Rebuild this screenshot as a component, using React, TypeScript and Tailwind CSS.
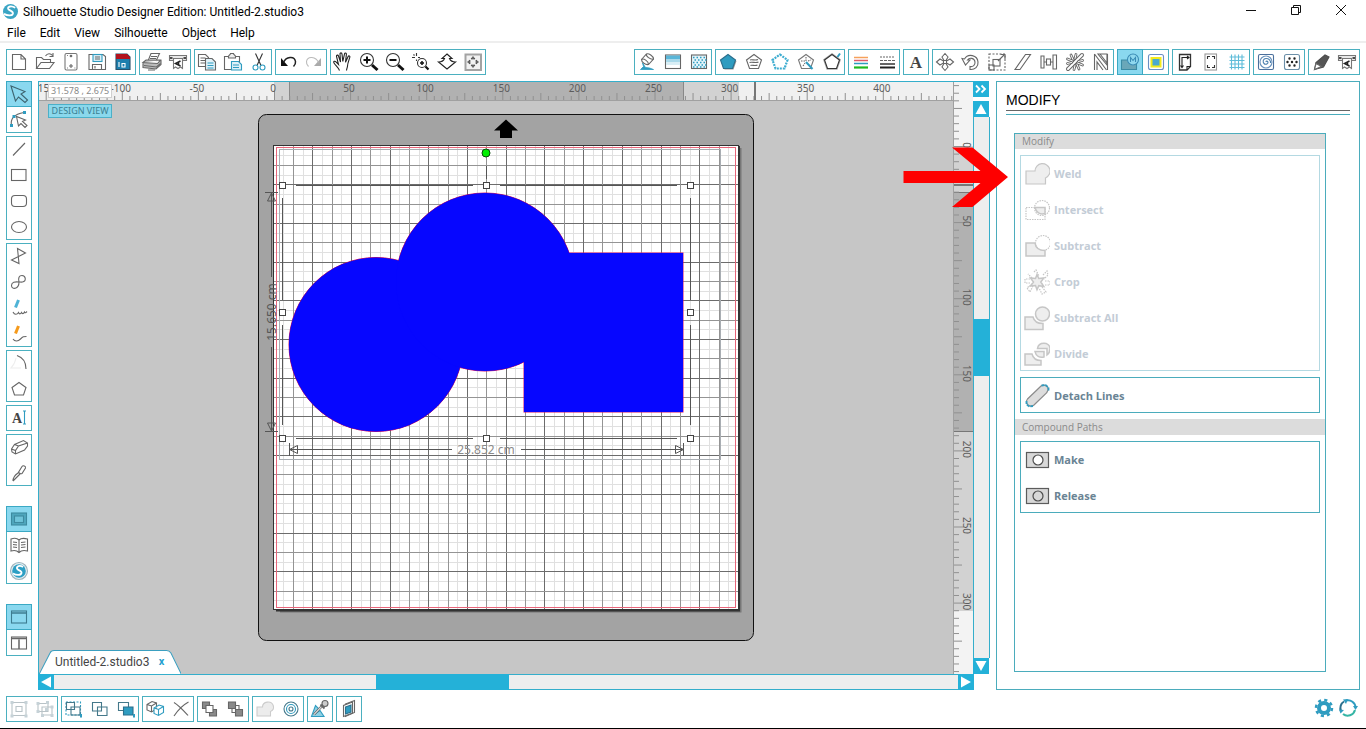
import type { ReactNode } from "react";
import clsx from "clsx";

// Blue used for the accent parts of the icons
const BLUE = "#2f9cc0";
const DARK = "#4d4d4d";
const PENTAGON = "M13 5.5l7.5 5.5-3 8.5h-9l-3-8.5z";

// Every icon is drawn on a 26x26 board, the size of a toolbar button
const ICONS: Record<string, ReactNode> = {
  new: <path d="M6.500 5.500h8.500l4.500 4.500v10.500h-13zM15 5.500v4.500h4.500" />,
  open: (
    <>
      <path d="M4.500 19V8.500h5l2 2h7v2.500M4.500 19.500l4.500-6h13l-4.500 6z" />
      <path d="M13.500 7c2-3 5-3 7-.5M21 4v3.500h-3.500" />
    </>
  ),
  library: (
    <>
      <rect x="7" y="4.500" width="12" height="16.500" rx="1.500" stroke="#777" />
      <circle cx="13" cy="7" r=".8" />
      <path d="M13 15v4M11 17h4M9 6.500h.8M9 19h.8M16.500 19h.8" />
    </>
  ),
  save: (
    <>
      <path d="M5 5.500h14l2.500 2v13H5z" />
      <rect x="9" y="5.500" width="9" height="7" stroke={BLUE} fill="#d9eef6" />
      <path d="M8.500 20.500v-5h9v5M11 17v2.500M11 8h5M11 10h5" />
    </>
  ),
  sdcard: (
    <>
      <path d="M6 5h11l3 3v12.500H6z" fill="#1d7fae" stroke="#27506b" />
      <path d="M6 5h11l3 3v2H6z" fill="#b3121d" stroke="none" />
      <path d="M9 13v5M12 14v4h3v-3.500h-3" stroke="#fff" />
    </>
  ),
  print: (
    <>
      <path d="M9 12l3-7.500h8.500L17 12M12 7.500h6M11 9.500h6" />
      <path d="M4 13.500l3-2.500h14.500l-3 3.500zM4 13.500v5l13 1.500 5-4.500v-4.500" fill="#bbb" />
      <path d="M5 16.500l12.500 1.500 4-3.500M9 21h7" />
    </>
  ),
  cutter: (
    <>
      <path d="M4.500 6.500h17v5h-17z" fill="#e8e8e8" stroke="#777" />
      <path d="M5 8h2.500v2H5zM18.500 8H21v2h-2.500z" fill={DARK} stroke="none" />
      <path d="M8.500 9.500h9v10l-2-1.500-2.500 1.500-2.500-1.500-2 1.500z" fill="#fff" stroke="#777" />
      <path d="M15.500 12l-5 2.500 5 2.500M13.500 13v3" stroke="#222" strokeWidth="1.500" />
    </>
  ),
  copy: (
    <>
      <path d="M4.500 5.500h7l3 3v9h-10z" fill="#fff" />
      <path d="M6.500 9h5M6.500 11.500h5M6.500 14h5" />
      <path d="M11.500 9.500h6.500l3.500 3.500v8h-10z" fill="#dff1f8" />
      <path d="M13.500 14h6M13.500 16.500h6M13.500 19h6" stroke={BLUE} />
    </>
  ),
  paste: (
    <>
      <path d="M4.500 7.500h15v13h-15z" />
      <path d="M8.500 7.500c0-1.500 2-1.500 2-3h3c0 1.500 2 1.500 2 3v1.500h-7z" fill="#eee" />
      <path d="M11.500 12.500h7l3 3v5.500h-10z" fill="#dff1f8" stroke={BLUE} />
      <path d="M13 16h6M13 18.500h6" stroke={BLUE} />
    </>
  ),
  cut: (
    <>
      <path d="M9.500 4.500l5.500 12M16.500 4.500L11 16.500" stroke="#333" />
      <circle cx="9.500" cy="18.500" r="2.500" stroke={BLUE} />
      <circle cx="16.500" cy="18.500" r="2.500" stroke={BLUE} />
    </>
  ),
  undo: (
    <>
      <path d="M6 9v8h7z" fill="#111" stroke="none" />
      <path d="M8.500 13.500c2.500-6 11-7 12-1 .3 2-.5 3.500-2 5" stroke="#222" strokeWidth="1.500" />
    </>
  ),
  redo: (
    <>
      <path d="M20 9v8h-7z" fill="#aaa" stroke="none" />
      <path d="M17.500 13.500c-2.500-6-11-7-12-1-.3 2 .5 3.500 2 5" stroke="#bbb" />
    </>
  ),
  pan: (
    <path
      d="M9.500 21.500c-1-3-4-5-5.500-7.500-1-1.700 1-2.300 2-1l2.500 2.500-2-8c-.3-1.500 1.500-2 2-.5l2 6-.5-8c0-1.500 1.900-1.500 2 0l.8 7.500L14.500 5c.2-1.500 2-1.200 1.900.2l-.9 8 2.500-5.500c.7-1.400 2.300-.7 1.800.7-1.300 4-2.200 6-2.300 8.500-.1 1.800-.8 2.600-1 4.600"
      stroke="#222"
    />
  ),
  zoomIn: (
    <>
      <circle cx="11" cy="11" r="6.500" stroke="#333" />
      <path d="M7.500 11h7M11 7.500v7" stroke="#111" strokeWidth="2" />
      <path d="M16 16l5.500 5" stroke="#111" strokeWidth="3" />
    </>
  ),
  zoomOut: (
    <>
      <circle cx="11" cy="11" r="6.500" stroke="#333" />
      <path d="M7.500 11h7" stroke="#111" strokeWidth="2" />
      <path d="M16 16l5.500 5" stroke="#111" strokeWidth="3" />
    </>
  ),
  zoomArea: (
    <>
      <path d="M4 8.500h3M10 8.500h2M8.500 4v3M8.500 10.500V12M5.500 5.500l1 1" stroke="#333" />
      <circle cx="14" cy="14" r="4.500" stroke="#333" />
      <path d="M12 14h4M14 12v4" stroke="#111" strokeWidth="1.500" />
      <path d="M17.500 17.500l3 3" stroke="#111" strokeWidth="2.200" />
    </>
  ),
  zoomDrag: <path d="M13 5l5 4.500h-2.500c1 2.500 2.500 3.500 6 3.500L13 20l-8.500-7c3.500 0 5-1 6-3.500H8z" stroke="#222" />,
  fit: (
    <>
      <rect x="5.500" y="5.500" width="15.500" height="15.500" stroke="#a3a3a3" strokeWidth="2" fill="#f2f2f2" />
      <path d="M13 7.500l2 2.500h-4zM13 18.500l2-2.500h-4zM7.500 13l2.500-2v4zM18.500 13L16 11v4z" fill="#777" stroke="#333" strokeWidth=".6" />
    </>
  ),
  fillColor: (
    <>
      <path d="M7.500 10.500l5-5.500c2-1 7 2 7 5l-5 5.500c-3 .5-7-2-7-5z" />
      <path d="M7.500 10.500c2-1.500 7 1.500 7 5M12.500 5c-1 2 4 6 7 5" />
      <path d="M8.500 14l1 3.500-3 3h13l-4-1.500-4-.5z" fill={BLUE} stroke={BLUE} strokeWidth=".8" />
    </>
  ),
  gradient: (
    <>
      <rect x="5.500" y="6" width="15" height="13.500" fill="#fff" />
      <path d="M6 6.500h14v3.500H6z" fill="#5ab6d8" stroke="none" />
      <path d="M6 10h14v3H6z" fill="#a9d9ea" stroke="none" />
      <path d="M6 13h14v3H6z" fill="#d9eef5" stroke="none" />
    </>
  ),
  pattern: (
    <>
      <rect x="5.500" y="6" width="15" height="13.500" fill="#e4f4fa" />
      <path d="M7 8.500h13M8.500 11h12M7 13.500h13M8.500 16h12M7 18h13" stroke={BLUE} strokeDasharray="1.500 2" strokeWidth="1.500" />
    </>
  ),
  pentFill: (
    <>
      <path d={PENTAGON} transform="translate(1 1)" fill="#999" stroke="none" />
      <path d={PENTAGON} fill={BLUE} stroke="#2b6f8c" />
    </>
  ),
  pentLines: (
    <>
      <path d={PENTAGON} />
      <path d="M9 11c2-1 5 1 8-.5M8.500 13.500c3-1 6 1 9-.5M9.500 16.500c2-1 4 1 7-.5" />
    </>
  ),
  pentDots: <path d={PENTAGON} stroke="#3cacd0" strokeWidth="2.200" strokeDasharray="2 1" />,
  pentStar: (
    <>
      <path d={PENTAGON} stroke="#777" />
      <path d="M13 8v4M8 12h4M10 17l2-3M15 12l3-1" strokeDasharray="1.500 1" />
      <path d="M13 13l6.500 7" stroke={BLUE} strokeWidth="2" />
    </>
  ),
  pentPen: (
    <>
      <path d={PENTAGON} stroke="#aaa" strokeWidth="2.500" />
      <path d={PENTAGON} fill="#fff" stroke="#333" />
      <path d="M18.500 8L21 4.500" stroke={BLUE} strokeWidth="2" />
    </>
  ),
  lineColor: (
    <>
      <path d="M6 8.500h14" stroke="#f6a15c" strokeWidth="1.500" />
      <path d="M6 11.500h14" stroke="#e05a6a" strokeWidth="1.500" />
      <path d="M6 14.500h14" stroke={BLUE} strokeWidth="1.500" />
      <path d="M6 18.500h14" stroke="#1fb91f" strokeWidth="2.200" />
    </>
  ),
  lineStyle: (
    <>
      <path d="M6 8h15" strokeDasharray="2 1" />
      <path d="M6 11.500h15" strokeDasharray="3 1" />
      <path d="M6 15h15" stroke="#333" strokeWidth="1.500" />
      <path d="M6 18.500h15" stroke="#222" strokeWidth="2" />
    </>
  ),
  text: (
    <text x="13" y="19" textAnchor="middle" fontFamily="Liberation Serif, serif" fontWeight="700" fontSize="17" fill="#444" stroke="none">
      A
    </text>
  ),
  move: (
    <path d="M13 4.500l3 3.500-2 3.500h-2L10 8zM13 21.500l3-3.500-2-3.500h-2L10 18zM4.500 13L8 10l3.500 2v2L8 16zM21.500 13L18 10l-3.500 2v2l3.500 2z" />
  ),
  rotate: <path d="M4 9.500l3.500 6.500 4.500-5H9.500c2-3 7-2 7.500 2 .3 3-2 5-5 4.500v3c5 .5 8.500-3 8-7.500-.6-7-10-9-13.500-3z" />,
  scale: (
    <>
      <path d="M5 5h16v16H5z" strokeDasharray="2 1.500" />
      <rect x="5" y="16" width="5" height="5" />
      <rect x="9" y="10.500" width="7" height="6.500" />
      <path d="M14 12l6-6M16.500 5.500H21V10" />
    </>
  ),
  shear: <path d="M15.500 5.500h5L10 20.500H5z" />,
  align: (
    <>
      <path d="M5 7v12h3V7zM17 6v14h3.500V6z" />
      <rect x="10.500" y="10" width="4" height="6" />
      <path d="M8 13h2.500M14.500 13H17" />
    </>
  ),
  replicate: (
    <>
      <path d="M6 20L20 6" strokeWidth="4" strokeLinecap="round" />
      <path d="M6 20L20 6" strokeWidth="2" stroke="#fff" strokeLinecap="round" />
      <path d="M9 6l2 4.500M5.500 10l5 2M14 5.500L13 9.500M5.500 14.500l4-1M17 20l-2-4.500M20.500 16l-5-2M12 20.500l1-4M20.500 11.500l-4 1" strokeWidth="2.800" strokeLinecap="round" />
      <path
        d="M9 6l2 4.500M5.500 10l5 2M14 5.500L13 9.500M5.500 14.500l4-1M17 20l-2-4.500M20.500 16l-5-2M12 20.500l1-4M20.500 11.500l-4 1"
        stroke="#fff"
        strokeWidth="1"
        strokeLinecap="round"
      />
    </>
  ),
  nest: (
    <>
      <path d="M6.500 5v16M19.500 5v16M6.500 5l12 16M9 21V13l6 8" />
      <path d="M10 5h9v11zM12 5l7 9" />
    </>
  ),
  modify: (
    <>
      <path d="M4.500 11h15v9.500h-15z" fill="#6aa7b8" stroke="#3a8ca5" />
      <circle cx="16" cy="10.500" r="5.500" fill="#8fd8ee" stroke="#3a8cb5" />
      <path d="M13.500 13V8.500l2.500 3 2.500-3V13" stroke="#3a8cb5" />
    </>
  ),
  offset: (
    <>
      <rect x="5.500" y="5.500" width="15" height="15" rx="2" stroke="#6b8fc4" />
      <rect x="8.500" y="9" width="9" height="8.500" fill="#4aa9cf" stroke="#f3ea1b" strokeWidth="2" />
    </>
  ),
  pageSetup: (
    <>
      <path d="M7.500 5.500h11v12l-3.500 3.500h-7.500z" stroke="#333" strokeWidth="1.300" />
      <path d="M10 18V8.500h7M15 7l2 1.500-2 1.500M8.500 16.500l1.500 2 1.500-2M15 21v-3.500h3.500" stroke="#222" />
    </>
  ),
  regMarks: (
    <>
      <rect x="7" y="5" width="11.500" height="16" stroke="#999" />
      <path d="M9.500 10V7.500H12M14 7.500h2.500V10M9.500 16v2.500H12M14 18.500h2.500V16" stroke="#333" />
    </>
  ),
  grid: <path d="M5.500 8h15M5.500 11.500h15M5.500 15h15M5.500 18.500h15M7.500 5.500v15M11 5.500v15M14.500 5.500v15M18 5.500v15" stroke="#5fbcd9" />,
  trace: (
    <>
      <rect x="5.500" y="5.500" width="15" height="15" rx="1.500" stroke="#4a6f9c" />
      <circle cx="13" cy="13" r="6" stroke="#6b93bd" />
      <path d="M13 13c0-1.500 2-1 2 .5s-2.500 2.500-4 1-1-5 2-5 5 2 4.500 4.500" stroke="#4a7fae" />
    </>
  ),
  rhinestone: (
    <>
      <rect x="5.500" y="5.500" width="15" height="15" rx="2" stroke="#6b8fa8" />
      <path
        d="M10.500 9.500h.01M15.500 9.500h.01M8.500 13h.01M13 13h.01M17.500 13h.01M10.500 16.500h.01M15.500 16.500h.01"
        stroke="#222"
        strokeWidth="2.400"
        strokeLinecap="round"
      />
    </>
  ),
  sketch: (
    <>
      <path d="M6.500 20.500l1.500-7 9-7.500 4 2-5.500 10z" fill="#555" stroke={DARK} />
      <path d="M6.500 20.500l1.500-6 5.500 3z" fill="#fff" />
    </>
  ),
  select: <path d="M5 5l4.500 15 3-4 6.500 5.500 2.500-2.500-6.500-6 4-2.500z" stroke="#3d6470" />,
  editPoints: (
    <>
      <path d="M5.500 19C4 12 8 7 18 5.500" />
      <path d="M4 17h3v3H4zM6.500 8h3v3h-3zM17 4h3v3h-3z" fill={BLUE} stroke="none" />
      <path d="M10.500 9.500l2 9.500 2.500-2.500 4 4 2-2-4.500-4 3-1.500z" fill="#fff" />
    </>
  ),
  line: <path d="M7 19.500L19 7" />,
  rect: <rect x="5.500" y="7.500" width="14.500" height="11" />,
  roundRect: <rect x="5.500" y="7.500" width="15" height="11" rx="3.500" />,
  ellipse: <ellipse cx="13" cy="13" rx="7.500" ry="5.500" />,
  polygon: <path d="M11.500 5.500l8 4.500-14 7 7.500 3.500z" />,
  curve: (
    <path d="M13 13c-1-4 0-6.500 3-6.500 4 0 4.500 6 .5 6.500-1.500.2-2.500 0-3.500 0-4-.5-7.500 0-7.500 3.500 0 4.500 7.500 4 7.500-3.500z" />
  ),
  freehand: (
    <>
      <path d="M9.500 12.500L12.500 5" stroke="#4fb3d6" strokeWidth="3" />
      <path d="M7 17c1.500 3 4 3 5.500.5 1 2.500 2.500 1 3 0 1 2 2.500 1 3-.5 1 1.500 1.500.5 2.500-.5" />
    </>
  ),
  smooth: (
    <>
      <path d="M9.500 12.500L12.500 5" stroke="#f59a1b" strokeWidth="3" />
      <path d="M7 18c2 3 5 2.500 7.500 0s3-2.500 6-2.500" />
    </>
  ),
  arc: (
    <>
      <path d="M10 8c-1 5-3 8-5 10h10" stroke="#eee" />
      <path d="M11 5.500c6 2 9 6.500 9 13.500" />
    </>
  ),
  pentagon: <path d="M13 6.500l7 5-2.500 7.500h-9L6 11.500z" />,
  textTool: (
    <>
      <text x="11" y="18" textAnchor="middle" fontFamily="Liberation Serif, serif" fontWeight="700" fontSize="14" fill="#444" stroke="none">
        A
      </text>
      <path d="M18.500 6v13M17 6h3M17 19h3" stroke={BLUE} />
    </>
  ),
  eraser: <path d="M5.500 15l3-4.500 9-4 4 2.500v3l-3 4-9 4-3.500-2zM5.500 15l4 1.500 3-4.500 9-3M9.500 16.500V20M8.500 10.500l4 1.500" />,
  knife: <path d="M7 21c0-3 2-6 5-8l4-6.500c1-1.500 4-.5 3.500 1.500L16 13.500c-1 .5-2.500 0-3.500-1M7 21l4-4 3-3" />,
  pageView: (
    <>
      <rect x="5.500" y="7" width="15" height="12" fill="#4fa6bd" stroke="#3d8aa0" />
      <rect x="8.500" y="10" width="9" height="6.500" fill="#6fc4da" stroke="#3d8aa0" />
    </>
  ),
  book: (
    <>
      <path d="M5 7c3-1 6-1 8 1 2-2 5-2 8.500-1v12c-3.500-1-6.500-.5-8.500 1.500C11 18.500 8 18 5 19zM13 8v12" />
      <path d="M7 10l4 .5M7 12.500l4 .5M7 15l4 .5M15 10.500l4.500-.5M15 13l4.500-.5M15 15.500l4.500-.5" />
    </>
  ),
  store: (
    <>
      <circle cx="13" cy="13" r="8.500" fill="#e6eef1" stroke="#9db4bd" />
      <circle cx="13" cy="13" r="6.800" fill="#2d9fc4" stroke="none" />
      <path d="M17 9c-3-2-6.500-1-6 1.500.4 2 5 2 4.500 4.500-.5 2.500-5 2.500-8.500.5" stroke="#fff" strokeWidth="1.800" />
    </>
  ),
  window: (
    <>
      <rect x="5.500" y="7" width="15" height="12" stroke="#3d7c90" />
      <path d="M5.500 9h15" stroke="#3d7c90" strokeWidth="1.500" />
    </>
  ),
  split: (
    <>
      <rect x="5.500" y="7" width="15" height="12" />
      <path d="M5.500 8.500h15M13 9.500V19" strokeWidth="1.500" />
    </>
  ),
  group: (
    <g stroke="#b9c3c7">
      <path d="M6 6.500h14v13H6zM10 10.500h6v5h-6z" />
      <path d="M4.500 5h3v3h-3zM18.500 5h3v3h-3zM4.500 18.500h3v3h-3zM18.500 18.500h3v3h-3z" fill="#c6d2d7" stroke="none" />
    </g>
  ),
  ungroup: (
    <g stroke="#b9c3c7">
      <path d="M6 7.500h10v8H6zM10 11h10v8H10z" />
      <path
        d="M4.500 6h3v3h-3zM14 5h3v3h-3zM4.500 14h3v3h-3zM18.500 9.500h3v3h-3zM9 18h3v3H9zM18.500 18h3v3h-3zM13 12h3v3h-3z"
        fill="#c6d2d7"
        stroke="none"
      />
    </g>
  ),
  selectAll: (
    <>
      <path d="M5 6h14.500v13H5z" strokeDasharray="2 1.500" stroke={BLUE} />
      <path d="M5.500 6.500h8v7h-8zM10 11h9v8h-9z" stroke="#44788a" />
      <path d="M20 18v3.500" stroke={BLUE} strokeWidth="2" />
    </>
  ),
  deselect: <path d="M5.500 6.500h9V11h5.500v8.500h-9.500V15h-5zM10.500 15v-4h4v4z" stroke="#44788a" />,
  selectColor: (
    <>
      <path d="M5.500 6.500h10v8h-10z" stroke="#44788a" fill="#fff" />
      <path d="M10.500 11h9.500v8h-9.500z" fill={BLUE} stroke="#2b6f8c" />
      <path d="M21 18v3.500" stroke={BLUE} strokeWidth="2" />
    </>
  ),
  duplicate: (
    <>
      <path d="M5 8.500l5-3 4.500 1.500v6l-5 3L5 14zM5 8.500l4.500 1.500 5-3M9.500 10v6" fill="#fff" />
      <path d="M12 12l5-3 4.500 1.500v6l-5 3-4.500-2zM12 12l4.500 1.500 5-3M16.500 13.500v6" fill="#fff" stroke={BLUE} />
    </>
  ),
  delete: <path d="M6 6.500c5 3 9 7.500 14 13M20.500 6C15 9 10 14 6 20" />,
  bringFront: (
    <>
      <path d="M5.500 6h7v6.500h-7zM12.500 13.500h7v6.500h-7z" fill="#8a8a8a" />
      <path d="M9 9.500h7v7H9z" fill="#fff" />
    </>
  ),
  sendBack: (
    <>
      <path d="M9 9.500h7v7H9z" fill="#fff" />
      <path d="M5.500 6h7v6.500h-7zM12.500 13.500h7v6.500h-7z" fill="#8a8a8a" />
    </>
  ),
  weldTool: <path d="M5 11h5.500a5.500 5 0 1 1 8 4.500V20H5z" fill="#ececec" stroke="#ccc" />,
  offsetTool: (
    <>
      <circle cx="13" cy="13" r="7" stroke="#44788a" />
      <circle cx="13" cy="13" r="4.500" stroke={BLUE} />
      <circle cx="13" cy="13" r="2" stroke="#44788a" />
    </>
  ),
  eyedropper: (
    <>
      <path d="M4.500 20.500l4-11 3 3-4.500 6 6-4 4 6z" fill="#8fd0e4" stroke={BLUE} />
      <path d="M7 18.500l8-8.500" stroke="#555" strokeWidth="2.500" />
      <path d="M7 18.500l8-8.500" stroke="#ddd" />
      <circle cx="18" cy="7.500" r="3" fill="#ccc" />
      <path d="M13.500 8.500l4 4" strokeWidth="1.800" />
    </>
  ),
  flip: (
    <>
      <path d="M9.500 8l9-3.500v12l-9 4z" fill="#fff" />
      <path d="M7.500 9.500v11l9-3.500V6z" fill="#fff" />
      <path d="M9.500 11l5.500-2v7l-5.500 2z" fill={BLUE} stroke="#2b6f8c" />
    </>
  ),
};

type Tool = [icon: string, label: string];

const TOP_LEFT: Tool[][] = [
  [["new", "New"], ["open", "Open"], ["library", "Open library"], ["save", "Save"], ["sdcard", "Save to card"]],
  [["print", "Print"], ["cutter", "Send to Silhouette"]],
  [["copy", "Copy"], ["paste", "Paste"], ["cut", "Cut"]],
  [["undo", "Undo"], ["redo", "Redo"]],
  [["pan", "Pan"], ["zoomIn", "Zoom in"], ["zoomOut", "Zoom out"], ["zoomArea", "Zoom selection"], ["zoomDrag", "Drag zoom"], ["fit", "Fit to window"]],
];

const TOP_RIGHT: Tool[][] = [
  [["fillColor", "Fill color"], ["gradient", "Fill gradient"], ["pattern", "Fill pattern"]],
  [["pentFill", "Fill"], ["pentLines", "Sketch fill"], ["pentDots", "Rhinestone edge"], ["pentStar", "Radial fill"], ["pentPen", "Shadow"]],
  [["lineColor", "Line color"], ["lineStyle", "Line style"]],
  [["text", "Text style"]],
  [["move", "Move"], ["rotate", "Rotate"], ["scale", "Scale"], ["shear", "Shear"], ["align", "Align"], ["replicate", "Replicate"], ["nest", "Nesting"]],
  [["modify", "Modify"], ["offset", "Offset"]],
  [["pageSetup", "Page setup"], ["regMarks", "Registration marks"], ["grid", "Grid"]],
  [["trace", "Trace"], ["rhinestone", "Rhinestones"]],
  [["sketch", "Sketch"], ["cutter", "Cut settings"]],
];

const SIDE: Tool[][] = [
  [["select", "Select"], ["editPoints", "Edit points"]],
  [["line", "Line"], ["rect", "Rectangle"], ["roundRect", "Rounded rectangle"], ["ellipse", "Ellipse"]],
  [["polygon", "Polygon"], ["curve", "Curve"], ["freehand", "Freehand"], ["smooth", "Smooth freehand"]],
  [["arc", "Arc"], ["pentagon", "Regular polygon"]],
  [["textTool", "Text"]],
  [["eraser", "Eraser"], ["knife", "Knife"]],
];
const SIDE_VIEWS: Tool[][] = [[["pageView", "Design page"], ["book", "Library"], ["store", "Store"]]];
const SIDE_SPLIT: Tool[][] = [[["window", "Single view"], ["split", "Split view"]]];

const BOTTOM: Tool[][] = [
  [["group", "Group"], ["ungroup", "Ungroup"]],
  [["selectAll", "Select all"], ["deselect", "Deselect all"], ["selectColor", "Select by color"]],
  [["duplicate", "Duplicate"], ["delete", "Delete"]],
  [["bringFront", "Bring to front"], ["sendBack", "Send to back"]],
  [["weldTool", "Weld shapes"], ["offsetTool", "Offset shapes"]],
  [["eyedropper", "Eyedropper"]],
  [["flip", "Layers"]],
];

const ACTIVE = ["select", "pageView", "window", "modify"];

function ToolGroups({ groups, vertical }: { groups: Tool[][]; vertical?: boolean }) {
  return (
    <div className={clsx("flex gap-[3px]", vertical && "flex-col")}>
      {groups.map((tools) => (
        <div key={tools[0][0]} className={clsx("flex ring-1 ring-inset ring-[#4bb0c0]", vertical && "flex-col")}>
          {tools.map(([icon, label]) => (
            <button
              key={icon}
              aria-label={label}
              className={clsx("size-[26px]", ACTIVE.includes(icon) && "bg-[#8ad8ef] ring-1 ring-inset ring-[#3ba9c4]")}
            >
              <svg viewBox="0 0 26 26" className="size-[26px]" fill="none" stroke="#666" strokeWidth="1.1">
                {ICONS[icon]}
              </svg>
            </button>
          ))}
        </div>
      ))}
    </div>
  );
}

// Ruler scale: pixels for one millimetre
const MM = 1.522;
const TICKS = Array.from({ length: 400 }, (_, i) => (i - 40) * 5);
const TOP_LABELS = [-150, -100, -50, 0, 50, 100, 150, 200, 250, 300, 350, 400];
const SIDE_LABELS = [0, 50, 100, 150, 200, 250, 300];

const tickLength = (mm: number) => (mm % 50 === 0 ? 10 : mm % 25 === 0 ? 8 : 5);

function TopRuler() {
  return (
    <svg className="block h-[19px] w-full bg-[#f0f0f0]" aria-hidden="true">
      <g transform="translate(235 0)">
        <rect x="0" width="465" height="19" fill="#d2d2d2" />
        <rect x="15" width="394" height="19" fill="#b1b1b1" />
        <path d="M15.500 0v19M409.500 0v19" stroke="#888" />
        {TICKS.map((mm) => (
          <line key={mm} x1={mm * MM + 0.5} x2={mm * MM + 0.5} y1={19 - tickLength(mm)} y2="19" stroke="#909090" />
        ))}
        {TOP_LABELS.map((mm) => (
          <text key={mm} x={mm * MM - 1} y="10" textAnchor="middle" fontSize="10" fill="#5c5c5c">
            {mm}
          </text>
        ))}
        <path d="M481 0v19" stroke="#777" strokeWidth="2" />
      </g>
      <rect y="18" width="100%" height="1" fill="#a0a0a0" />
    </svg>
  );
}

function SideRuler() {
  return (
    <div className="relative w-[20px] shrink-0 overflow-hidden border-l border-[#a0a0a0] bg-[#f3f3f3]">
      <svg className="absolute inset-0 size-full" aria-hidden="true">
        <g transform="translate(0 64)">
          <rect y="0" width="20" height="465" fill="#d2d2d2" />
          <rect y="46" width="20" height="239" fill="#b1b1b1" />
          <path d="M0 46.500h20M0 285.500h20" stroke="#777" />
          {TICKS.map((mm) => (
            <line key={mm} y1={mm * MM + 0.5} y2={mm * MM + 0.5} x1="0" x2={tickLength(mm)} stroke="#909090" />
          ))}
          {SIDE_LABELS.map((mm) => (
            <text key={mm} transform={`translate(9 ${mm * MM - 1}) rotate(90)`} textAnchor="middle" fontSize="10" fill="#5c5c5c">
              {mm}
            </text>
          ))}
          <path d="M0 39h20" stroke="#777" strokeWidth="2" />
        </g>
      </svg>
    </div>
  );
}

const CELL = 19.35;
const HALF_STEPS = Array.from({ length: 47 }, (_, i) => i + 1);
const gridColor = (i: number) => (i % 4 === 0 ? "#6c6c6c" : i % 2 === 0 ? "#949494" : "#e0e0e0");

const SHAPES = (
  <>
    <circle cx="376" cy="344.500" r="87" />
    <circle cx="485" cy="282" r="89" />
    <rect x="524" y="253" width="159" height="159" />
  </>
);

function Artboard() {
  return (
    <svg className="absolute inset-0 size-full" aria-label="Cutting mat">
      <g transform="translate(-39 -101)">
        <rect x="258.500" y="114.500" width="495" height="526" rx="8" fill="#a3a3a3" stroke="#111" />
        <path d="M506 119.500l12 11h-6v7.500h-12v-7.500h-6z" fill="#000" />
        <path d="M276 148h465.500v464.500H280z" fill="#777" />
        <path d="M274 146h466v465.500H276z" fill="#333" />
        <rect x="274" y="146" width="464" height="463" fill="#fff" />
        <g shapeRendering="crispEdges">
          {HALF_STEPS.filter((i) => i % 2 === 1).map((i) => (
            <path key={i} d={`M${274 + (i * CELL) / 2} 146v463M274 ${146 + (i * CELL) / 2}h464`} stroke={gridColor(i)} />
          ))}
          {HALF_STEPS.filter((i) => i % 2 === 0).map((i) => (
            <path key={i} d={`M${274 + (i * CELL) / 2} 146v463M274 ${146 + (i * CELL) / 2}h464`} stroke={gridColor(i)} />
          ))}
        </g>
        <rect x="273.500" y="145.500" width="465" height="464" fill="none" stroke="#333" />
        <rect x="276.500" y="147.500" width="459" height="460" fill="none" stroke="#e8657a" />
        <rect x="279.500" y="149.500" width="441" height="310" fill="none" stroke="#a9aeb3" />

        <g stroke="#d0106a">{SHAPES}</g>
        <g fill="#0606ff">{SHAPES}</g>

        <g stroke="#555" fill="none">
          <path d="M296 185.500h177M500 185.500h177M296 438.500h177M500 438.500h177" />
          <path d="M282.500 198v102M282.500 325v100M690.500 198v102M690.500 325v100M486.500 166v13" />
          <path d="M271.500 193v84M271.500 347v84M265 192.500h13M265 431.500h13M267.500 201h8l-4-8zM267.500 423h8l-4 8z" />
          <path d="M289.500 443v13M683.500 443v13M290 449.500h162M521 449.500h162M297.500 445.500v8l-8-4zM675.500 445.500v8l8-4z" />
        </g>
        <g fill="#fff" stroke="#444">
          {[282, 486, 690].map((x) =>
            [185, 312, 438].map(
              (y) => !(x === 486 && y === 312) && <rect key={`${x}-${y}`} x={x - 2.5} y={y - 2.5} width="6" height="6" />
            )
          )}
        </g>
        <circle cx="486" cy="153" r="4" fill="#00f000" stroke="#0a4a0a" />
        <text x="486" y="454" textAnchor="middle" fontSize="12" fill="#8a8a8a">
          25.852 cm
        </text>
        <text transform="translate(276 312) rotate(-90)" textAnchor="middle" fontSize="12" fill="#555">
          15.650 cm
        </text>
      </g>
    </svg>
  );
}

function ScrollArrow({ label, d }: { label: string; d: string }) {
  return (
    <button aria-label={label} className="size-[16px] shrink-0 bg-[#24b1d8]">
      <svg viewBox="0 0 16 16" className="size-[16px]" fill="#fff">
        <path d={d} />
      </svg>
    </button>
  );
}

const MODIFY_ICONS: Record<string, ReactNode> = {
  Weld: <path d="M2 10h9a7.500 7.500 0 1 1 10.500 7v6H2z" fill="#eee" />,
  Intersect: (
    <>
      <path d="M2 10.500h19v12H2z" strokeDasharray="1.500 1" />
      <circle cx="18" cy="11" r="7.500" strokeDasharray="1.500 1" />
      <path d="M11 10.500h10v6c-5 1.500-9-1-10-6z" fill="#eee" strokeWidth="1.500" />
    </>
  ),
  Subtract: (
    <>
      <circle cx="19" cy="10" r="7.500" strokeDasharray="1.500 1" />
      <path d="M2 10h9c.5 4.500 4 7.500 10 7.500V23H2z" fill="#eee" strokeWidth="1.500" />
    </>
  ),
  Crop: (
    <>
      <path
        d="M10 3l2-2 3 6M19 6l4-4 1 4-4 4M21 12h5v4h-5M18 18l4 5-4 2-3-6M9 17l-3 6-3-4 5-4M6 10H1v4h5M8 9L4 5"
        strokeDasharray="1.500 1"
      />
      <path d="M13 5.500l1.800 4 5-.5-3 4 3 4.500-5-.8-1.800 4-1.500-4.200-5 .5 3-4-3-4 5 .5z" fill="#eee" strokeWidth="1.500" />
    </>
  ),
  "Subtract All": (
    <>
      <path d="M1 12h8c1 4 4 6.500 10 6.500v6H1z" fill="#eee" strokeWidth="1.500" />
      <circle cx="18.500" cy="9" r="7" fill="#eee" strokeWidth="1.500" />
    </>
  ),
  Divide: (
    <>
      <path d="M1 13h7c1 4 4 6.500 9 6.500V24H1z" fill="#eee" strokeWidth="1.500" />
      <path d="M11 10.500h9v5.500c-4.500 1-8-1-9-5.500zM13.500 7.500c1-7 12-7 12.500 0 0 3-1 5-3 6.500V7.500z" fill="#eee" strokeWidth="1.500" />
    </>
  ),
  "Detach Lines": (
    <>
      <path d="M4 22c-2-2-2-4-.5-6L17 3c3-2 8 0 7 4-.5 1.500-1 2-1.500 3L10 22c-2 1.500-4 1.500-6 0z" fill="#ddd" stroke="#8b8b8b" />
      <path d="M2.500 18v3.500l3 2 3.500-.5M17.500 2.500l4-.5 3 2.500v4" stroke={BLUE} strokeWidth="1.800" strokeDasharray="3 1" />
    </>
  ),
  Make: (
    <>
      <rect x="2.500" y="5.500" width="22" height="15" fill="#d8d8d8" stroke="#5c5c5c" />
      <circle cx="14" cy="13" r="5" fill="#fff" stroke="#4d4d4d" />
    </>
  ),
  Release: (
    <>
      <rect x="2.500" y="5.500" width="22" height="15" fill="#d8d8d8" stroke="#5c5c5c" />
      <circle cx="14" cy="13" r="5" fill="#d8d8d8" stroke="#4d4d4d" />
    </>
  ),
};

function ActionList({ items, disabled }: { items: string[]; disabled?: boolean }) {
  return (
    <div className={clsx("mx-[5px] my-[6px] flex flex-col border", disabled ? "border-[#b4d9e2]" : "border-[#4bacbc]")}>
      {items.map((name) => (
        <button
          key={name}
          disabled={disabled}
          className={clsx(
            "flex h-[36px] items-center gap-1 pl-[3px] text-left font-['Open_Sans',sans-serif] text-[11px] font-bold last:h-[34px] last:pt-[2px]",
            disabled ? "text-[#c3ccd6]" : "text-[#6a8494]"
          )}
        >
          <svg viewBox="0 0 26 26" className="size-[26px]" fill="none" stroke="#c6c6c6" strokeWidth="1.200">
            {MODIFY_ICONS[name]}
          </svg>
          {name}
        </button>
      ))}
    </div>
  );
}

function ModifyPanel() {
  return (
    <section className="relative flex w-[364px] shrink-0 flex-col border border-[#4bacbc] px-[9px] pt-[9px] pb-[17px]">
      <h1 className="mb-px font-['Liberation_Sans',sans-serif] text-[14px] leading-[18px] text-black">MODIFY</h1>
      <div className="h-[5px] border-t border-b border-t-[#666] border-b-[#4bacbc]" />
      <div className="mt-[18px] mr-[24px] ml-2 flex-1 border border-[#4bacbc]">
        <h2 className="h-[15px] bg-[#dcdcdc] pl-[7px] font-['Open_Sans',sans-serif] text-[10px] leading-[15px] text-[#8a8a8a]">Modify</h2>
        <ActionList disabled items={["Weld", "Intersect", "Subtract", "Crop", "Subtract All", "Divide"]} />
        <ActionList items={["Detach Lines"]} />
        <h2 className="h-[16px] bg-[#dcdcdc] pl-[7px] font-['Open_Sans',sans-serif] text-[10px] leading-[16px] text-[#8a8a8a]">
          Compound Paths
        </h2>
        <ActionList items={["Make", "Release"]} />
      </div>
      {/* Arrow that points at the Weld action */}
      <svg viewBox="0 0 105 60" className="absolute top-[65px] -left-[94px] h-[60px] w-[105px]" fill="#fe0000" aria-hidden="true">
        <path d="M.5 24h77L49 .5h20.500l35.500 29.500L69.500 60H49l28.500-24H.5z" />
      </svg>
    </section>
  );
}

function TitleBar() {
  return (
    <header className="flex h-[24px] items-start justify-between px-[3px]">
      <div className="flex h-[23px] items-center gap-[5px] font-['Roboto',sans-serif] text-[12px] text-black">
        <svg viewBox="0 0 16 16" className="size-[15px]" fill="none">
          <circle cx="8" cy="8" r="8" fill="#3aa5c4" />
          <path d="M13 4C9 1.500 5 2.500 5.500 5c.5 2.200 6 2.500 5 5.500-1 2.500-6 2-9.500 0" stroke="#fff" strokeWidth="2" />
        </svg>
        Silhouette Studio Designer Edition: Untitled-2.studio3
      </div>
      <div className="flex">
        {[
          ["Minimize", "M0 5.500h10"],
          ["Restore", "M.5 2.500h7v7h-7zM2.500 2.500v-2h7v7h-2"],
          ["Close", "M0 0l10 10M10 0L0 10"],
        ].map(([label, d]) => (
          <button key={label} aria-label={label} className="flex h-[20px] w-[45px] items-center justify-center">
            <svg viewBox="0 0 10 10" className="size-[10px]" fill="none" stroke="#111">
              <path d={d} />
            </svg>
          </button>
        ))}
      </div>
    </header>
  );
}

export default function App() {
  return (
    <div className="flex min-h-screen flex-col bg-white font-['Noto_Sans','Open_Sans',sans-serif]">
      <TitleBar />
      <nav className="flex h-[19px] items-center gap-[14px] border-b-2 border-[#eeeeee] px-[7px] font-['Roboto',sans-serif] text-[12px] leading-4 text-black">
        {["File", "Edit", "View", "Silhouette", "Object", "Help"].map((item) => (
          <button key={item}>{item}</button>
        ))}
      </nav>

      <div className="flex justify-between px-[6px] pt-[6px]">
        <ToolGroups groups={TOP_LEFT} />
        <ToolGroups groups={TOP_RIGHT} />
      </div>

      <main className="flex flex-1 gap-[6px] p-[6px]">
        <div className="flex flex-col gap-5">
          <ToolGroups groups={SIDE} vertical />
          <ToolGroups groups={SIDE_VIEWS} vertical />
          <ToolGroups groups={SIDE_SPLIT} vertical />
        </div>

        <div className="flex min-w-0 flex-1 flex-col">
          <div className="flex flex-1">
            <div className="flex min-w-0 flex-1 border-t border-l border-[#35aecb]">
              <div className="relative flex min-w-0 flex-1 flex-col">
                <TopRuler />
                <div className="relative flex-1 overflow-hidden bg-[#c6c6c6]">
                  <Artboard />
                  <div className="absolute bottom-0 left-0 flex h-[24px] items-center gap-2 px-4 font-['Roboto',sans-serif] text-[12px] text-[#444]">
                    <svg viewBox="0 0 142 24" preserveAspectRatio="none" className="absolute inset-0 size-full" aria-hidden="true">
                      <path d="M0 24.500L11 3q1-2.500 4-2.500h112q3 0 4.500 2.500L142 24.500z" fill="#fff" stroke="#3a9fc0" />
                    </svg>
                    <span className="relative">Untitled-2.studio3</span>
                    <button className="relative h-5 w-2 text-[11px] leading-4 font-bold text-[#1f9fd0]">x</button>
                  </div>
                </div>
                <div className="absolute top-[2px] left-[9px] flex flex-col gap-[6px] text-center text-[9px] leading-[12px]">
                  <div className="border border-[#d0d0d0] bg-white px-[2px] text-[#8a8a8a]">31.578 , 2.675</div>
                  <div className="border border-[#4bb0c8] bg-[#8ad8ec] text-[#3c7f92]">DESIGN VIEW</div>
                </div>
              </div>
              <SideRuler />
            </div>

            <div className="flex w-[17px] flex-col">
              <button aria-label="Collapse panel" className="mb-1 size-[16px] shrink-0 bg-[#24b1d8]">
                <svg viewBox="0 0 16 16" className="size-[16px]" fill="none" stroke="#fff" strokeWidth="1.800">
                  <path d="M3 4.500L6.500 8 3 11.500M8.500 4.500L12 8l-3.500 3.500" />
                </svg>
              </button>
              <ScrollArrow label="Scroll up" d="M8 3l5.500 10h-11z" />
              <div className="flex flex-1 flex-col border-x border-[#35aecb] bg-[#eeeeee]">
                <div className="grow-[202]" />
                <div className="-mx-px h-[57px] bg-[#24b1d8]" />
                <div className="grow-[282]" />
              </div>
              <ScrollArrow label="Scroll down" d="M8 13l5.500-10h-11z" />
            </div>
          </div>
          <div className="mr-[16px] flex h-[16px]">
            <ScrollArrow label="Scroll left" d="M3 8l10-5.500v11z" />
            <div className="flex flex-1 border-y border-[#35aecb] bg-[#eeeeee]">
              <div className="grow-[322]" />
              <div className="-my-px w-[133px] bg-[#24b1d8]" />
              <div className="grow-[449]" />
            </div>
            <ScrollArrow label="Scroll right" d="M13 8L3 2.500v11z" />
          </div>
        </div>

        <ModifyPanel />
      </main>

      <footer className="flex items-start justify-between border-b border-black px-[6px] pb-[6px]">
        <ToolGroups groups={BOTTOM} />
        <div className="flex h-[24px] items-center gap-1 pr-[2px]">
          <button aria-label="Preferences">
            <svg viewBox="0 0 20 20" className="size-5" fill="none">
              <circle cx="10" cy="10" r="5" stroke="#2f9cc0" strokeWidth="4" />
              <circle cx="10" cy="10" r="8" stroke="#2f9cc0" strokeWidth="2.500" strokeDasharray="3.140 3.140" />
            </svg>
          </button>
          <button aria-label="Refresh">
            <svg viewBox="0 0 20 20" className="size-5" fill="none" strokeWidth="2">
              <path d="M3 13a7.500 7.500 0 0 1 3-9.500" stroke="#2b6f8c" />
              <path d="M8 2.500a7.500 7.500 0 0 1 9.500 7" stroke="#2f9cc0" />
              <path d="M17 12a7.500 7.500 0 0 1-12 4" stroke="#35b5a5" />
              <path d="M15 8h5l-2.500 4zM1 11.500l5 .5-3.500 3.500zM5 1.500L10 1 8 6z" fill="#2f9cc0" />
            </svg>
          </button>
        </div>
      </footer>
    </div>
  );
}
